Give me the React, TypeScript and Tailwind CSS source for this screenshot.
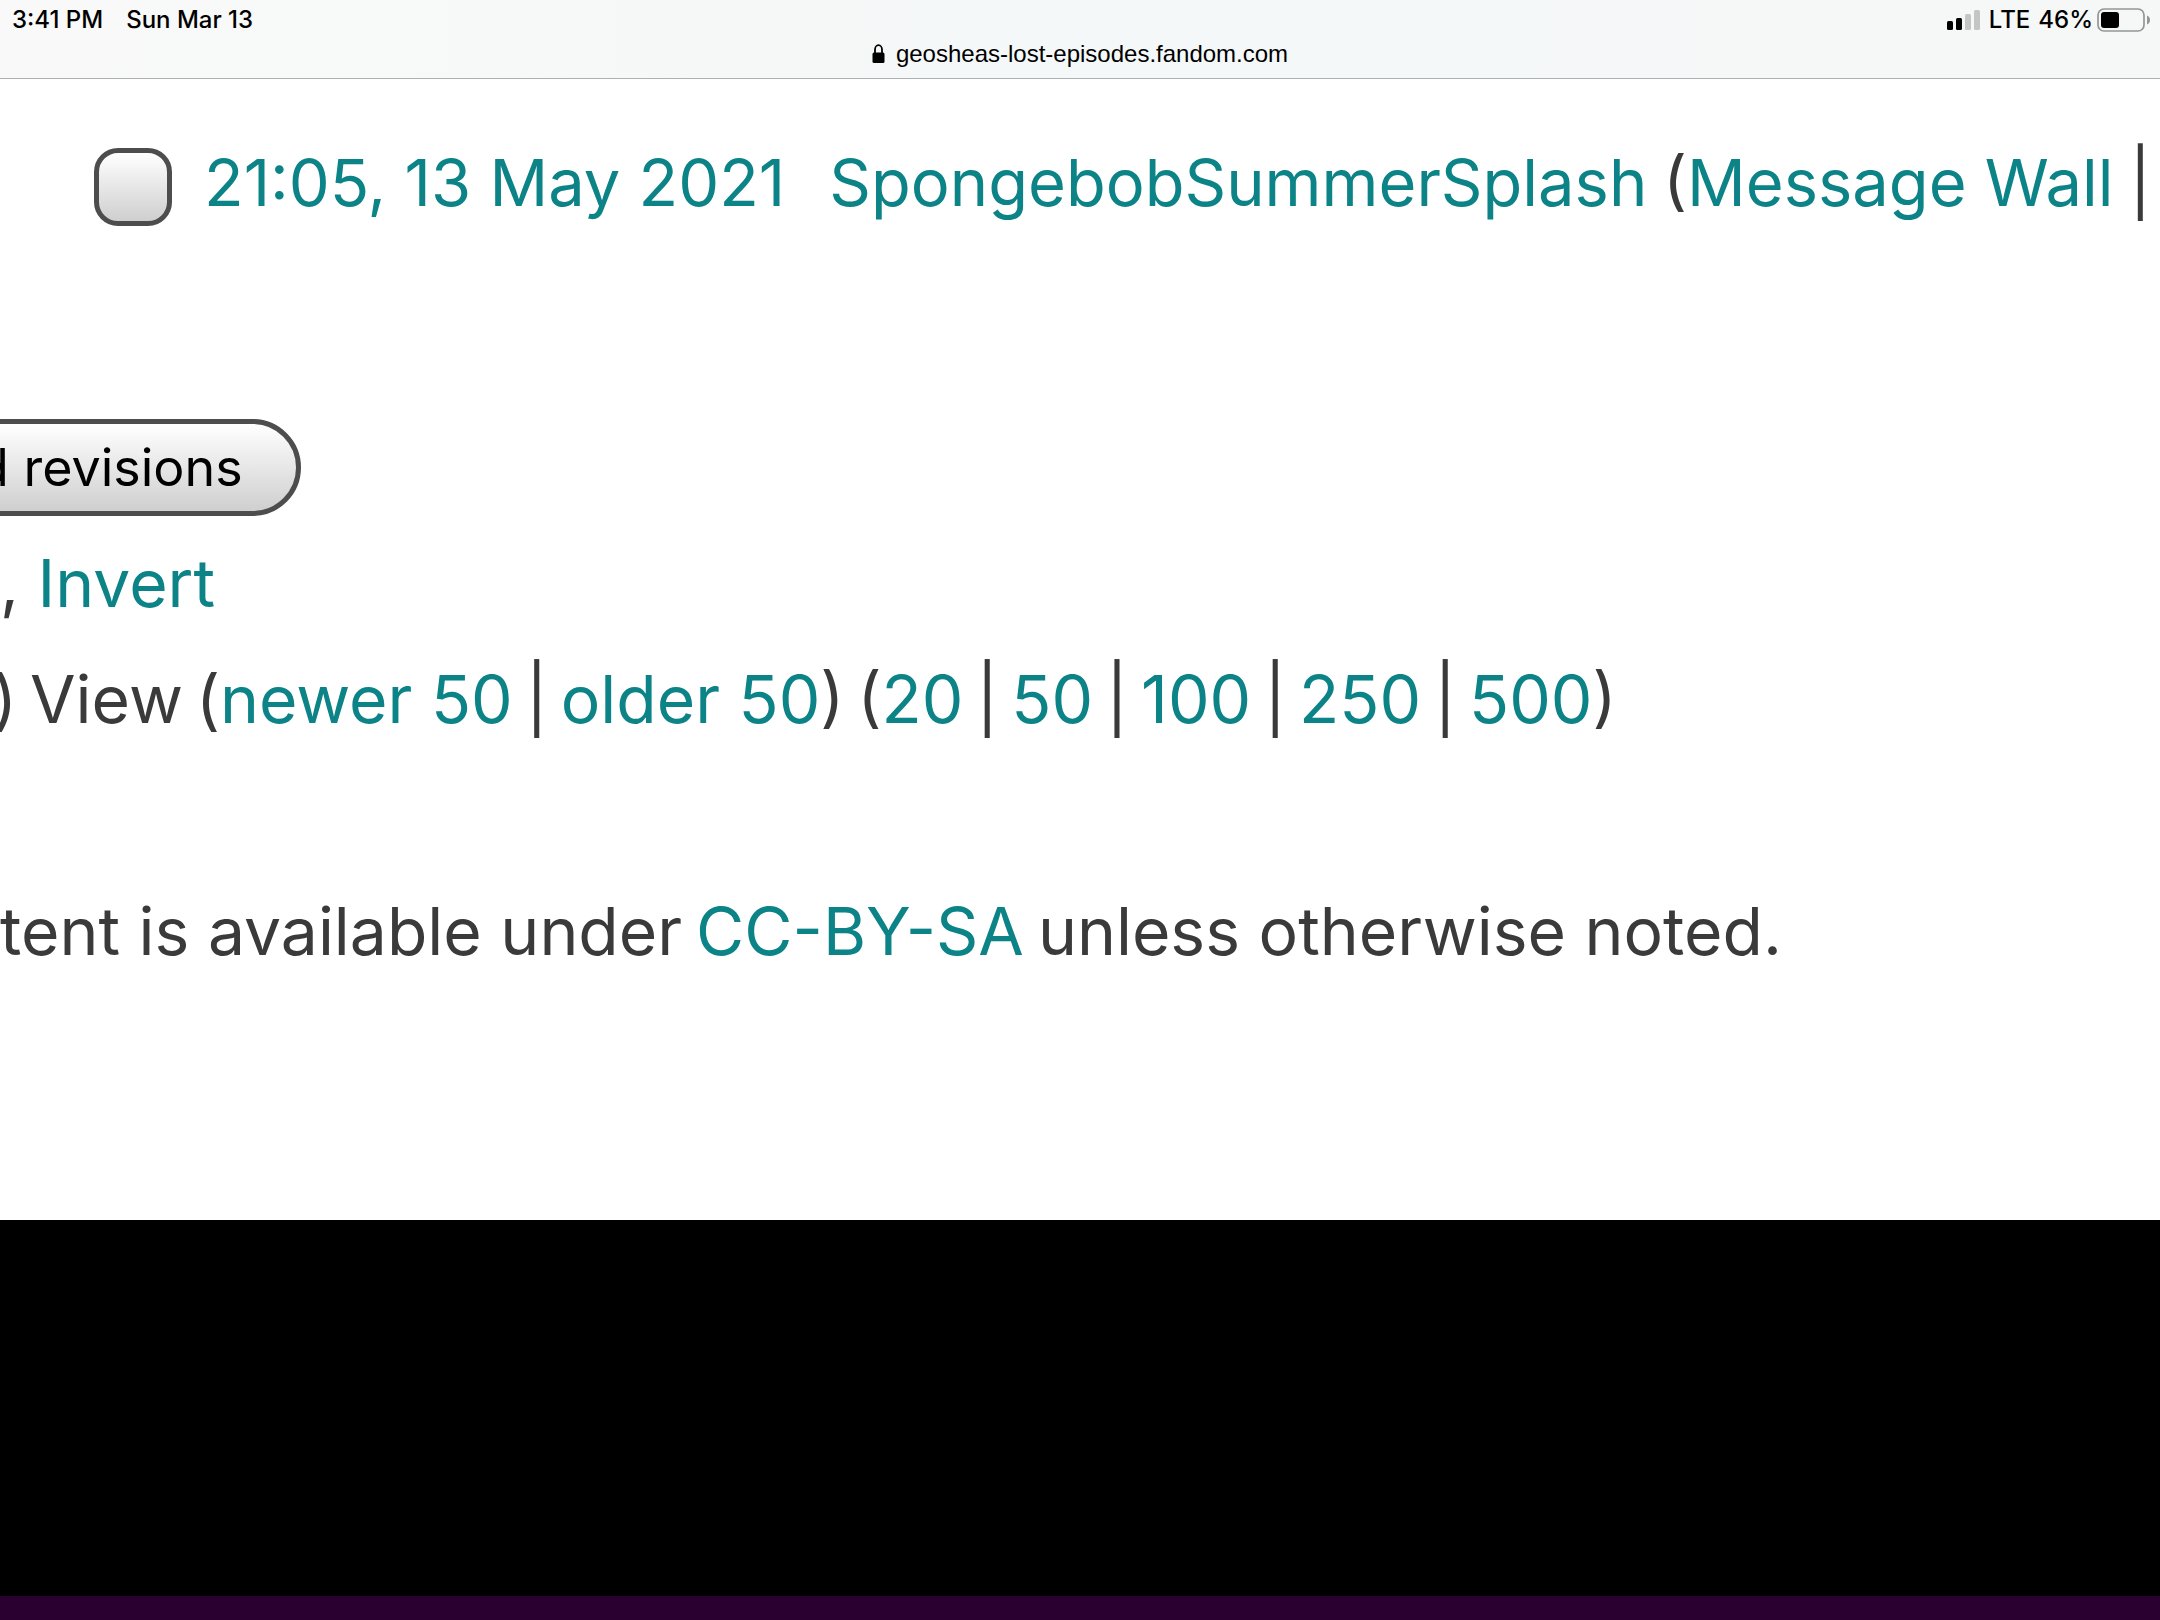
const limits = ['20', '50', '100', '250']

function WikiLink({ children }: { children: string }) {
  return (
    <a href="#" className="text-[#0b8387]">
      {children}
    </a>
  )
}

function LockIcon() {
  return (
    <svg viewBox="0 0 13 20" className="w-[13px] h-5" aria-hidden="true">
      <path d="M3 9V5.5a3.5 4.3 0 0 1 7 0V9" fill="none" stroke="black" strokeWidth="1.8" />
      <rect x="0.5" y="8.5" width="12" height="10.5" rx="1.5" fill="black" />
    </svg>
  )
}

function SignalIcon() {
  return (
    <svg viewBox="0 0 34 20" className="w-[34px] h-5" aria-hidden="true">
      <rect x="0" y="11" width="6" height="9" rx="1.5" fill="black" />
      <rect x="9" y="8" width="6" height="12" rx="1.5" fill="black" />
      <rect x="18" y="4" width="6" height="16" rx="1.5" fill="#c4c6c6" />
      <rect x="27" y="0" width="6" height="20" rx="1.5" fill="#c4c6c6" />
    </svg>
  )
}

function BatteryIcon() {
  return (
    <svg viewBox="0 0 53 24" className="w-[53px] h-6" aria-hidden="true">
      <rect x="1" y="1" width="46" height="22" rx="6" fill="none" stroke="#949696" strokeWidth="1.7" />
      <rect x="4" y="4" width="18" height="16" rx="3" fill="black" />
      <path d="M50 7.5c2 .8 3 2.300 3 4.500s-1 3.700-3 4.500z" fill="#949696" />
    </svg>
  )
}

/** Status bar with the collapsed Safari address below it. */
function BrowserHeader() {
  return (
    <header className="h-[79px] border-b border-[#aeb1b1] bg-linear-to-r from-[#f9f9f9] via-[#f5f8f8] to-[#f6f8f8] text-black font-[Inter,sans-serif]">
      <div className="flex justify-between h-10 pl-3 pr-[10px] text-2xl leading-10 font-medium">
        <div className="flex gap-[23px]">
          <span>3:41 PM</span>
          <span>Sun Mar 13</span>
        </div>
        <div className="flex items-center">
          <SignalIcon />
          <span className="ml-2">LTE</span>
          <span className="ml-2 mr-1">46%</span>
          <BatteryIcon />
        </div>
      </div>
      <div className="flex justify-center items-center gap-[11px] h-7 text-2xl leading-7">
        <LockIcon />
        <span className="font-['Liberation_Sans',sans-serif]">geosheas-lost-episodes.fandom.com</span>
      </div>
    </header>
  )
}

export default function App() {
  return (
    <div className="min-h-screen flex flex-col bg-black overflow-hidden">
      <BrowserHeader />

      <main className="pt-[46px] pb-[231px] bg-white text-[#3a3a3a] text-[66px] leading-[116px] whitespace-nowrap overflow-hidden font-[Inter,sans-serif]">
        {/* Revision row */}
        <div className="flex items-center h-[116px] pl-[94px] text-[65px]">
          <input
            type="checkbox"
            aria-label="Select revision"
            className="appearance-none shrink-0 size-[78px] mt-2 mr-8 rounded-3xl border-5 border-[#4d4d4d] bg-linear-to-b from-white to-[#cfcfcf]"
          />
          <WikiLink>21:05, 13 May 2021</WikiLink>
          <div className="flex gap-4 ml-11">
            <WikiLink>SpongebobSummerSplash</WikiLink>
            <span>
              (<WikiLink>Message Wall</WikiLink>
            </span>
            <span>|</span>
          </div>
        </div>

        <button
          type="button"
          className="block h-[97px] mt-[178px] -ml-[92px] pl-16 pr-[53px] rounded-full border-5 border-[#4d4d4d] bg-linear-to-b from-white to-[#cfcfcf] text-black text-[52px] leading-[88px]"
        >
          d revisions
        </button>

        <p className="mt-[9px]">
          , <WikiLink>Invert</WikiLink>
        </p>
        <p className="flex gap-[13px] -ml-[7px]">
          <span>)</span>
          <span>View</span>
          <span>
            (<WikiLink>newer 50</WikiLink>
          </span>
          <span>|</span>
          <span>
            <WikiLink>older 50</WikiLink>)
          </span>
          {limits.map((limit, i) => (
            <span key={limit} className="flex gap-[13px]">
              <span>
                {i === 0 && '('}
                <WikiLink>{limit}</WikiLink>
              </span>
              <span>|</span>
            </span>
          ))}
          <span>
            <WikiLink>500</WikiLink>)
          </span>
        </p>
        <p className="flex gap-[14px] mt-[116px]">
          <span>tent is available under</span>
          <WikiLink>CC-BY-SA</WikiLink>
          <span>unless otherwise noted.</span>
        </p>
      </main>

      <div className="flex-1" />
      <footer className="h-6 bg-[#290030]" />
    </div>
  )
}
